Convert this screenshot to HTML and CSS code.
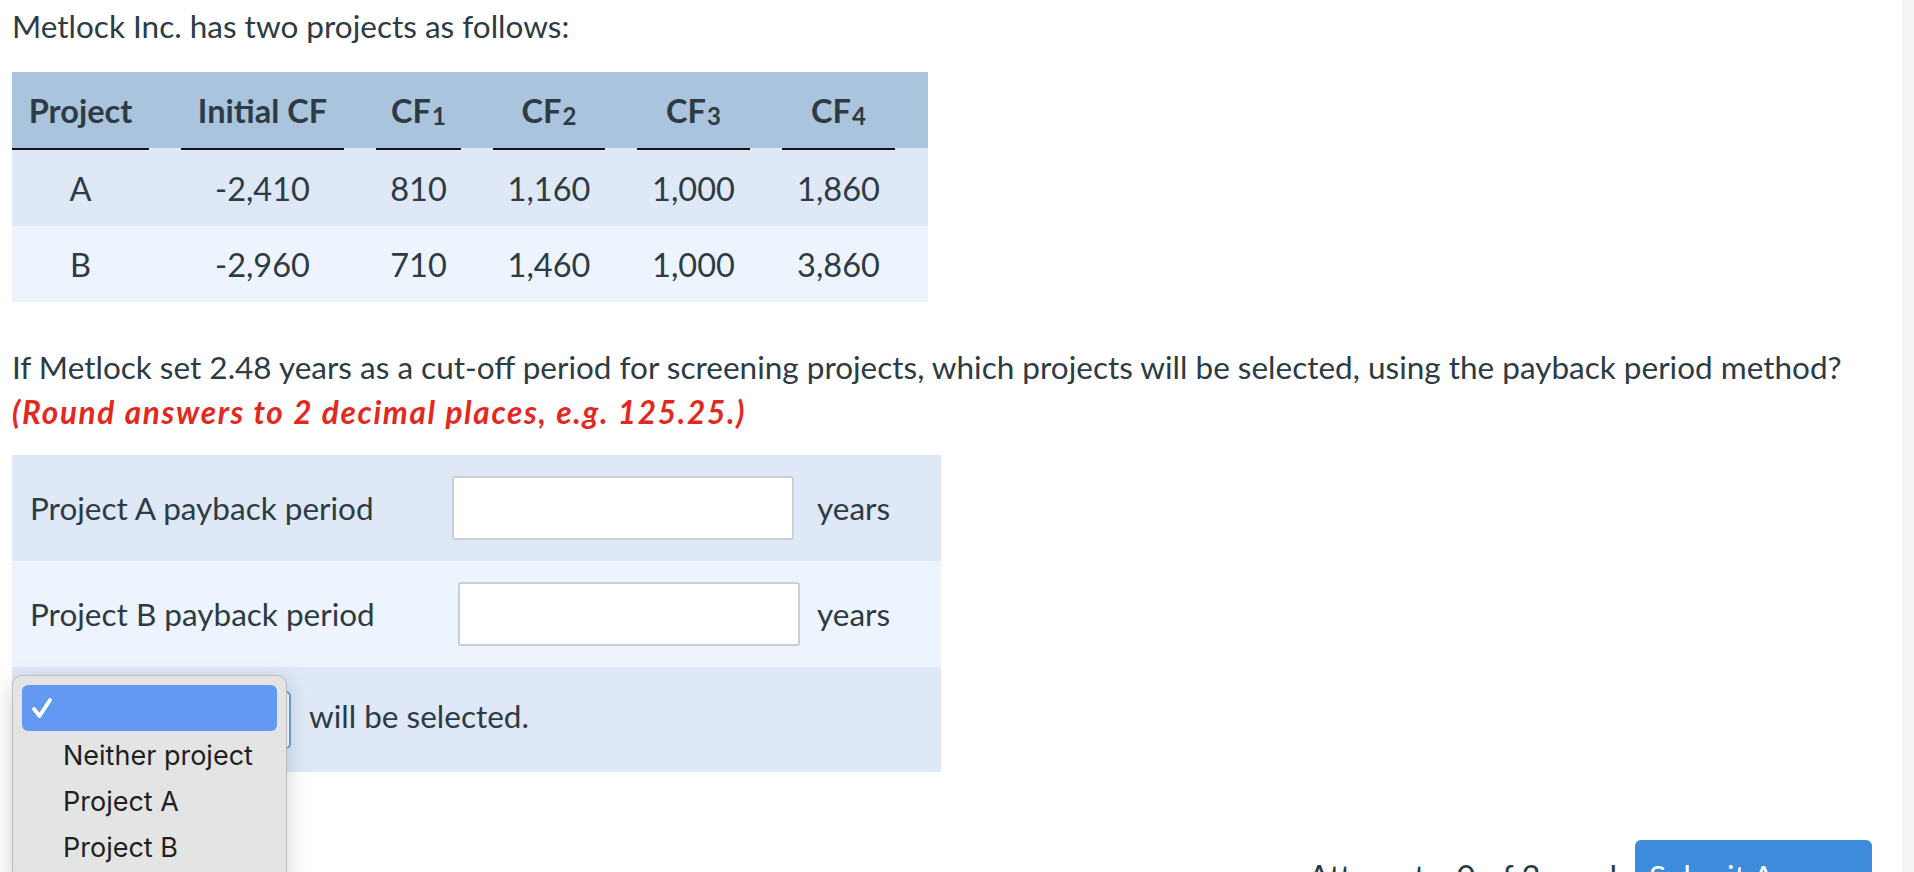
FILE: index.html
```html
<!DOCTYPE html>
<html lang="en">
<head>
  <meta charset="UTF-8">
  <meta name="viewport" content="width=device-width, initial-scale=1.0">
  <title>Payback Period Question</title>
  <link rel="stylesheet" href="styles.css">
</head>
<body>
  <div class="question-page">
    <p class="intro">Metlock Inc. has two projects as follows:</p>

    <div class="cf-table">
      <div class="cf-row cf-head">
        <div class="cf-cell">Project</div>
        <div class="cf-cell">Initial CF</div>
        <div class="cf-cell">CF<sub>1</sub></div>
        <div class="cf-cell">CF<sub>2</sub></div>
        <div class="cf-cell">CF<sub>3</sub></div>
        <div class="cf-cell">CF<sub>4</sub></div>
      </div>
      <div class="cf-row cf-odd">
        <div class="cf-cell">A</div>
        <div class="cf-cell">-2,410</div>
        <div class="cf-cell">810</div>
        <div class="cf-cell">1,160</div>
        <div class="cf-cell">1,000</div>
        <div class="cf-cell">1,860</div>
      </div>
      <div class="cf-row cf-even">
        <div class="cf-cell">B</div>
        <div class="cf-cell">-2,960</div>
        <div class="cf-cell">710</div>
        <div class="cf-cell">1,460</div>
        <div class="cf-cell">1,000</div>
        <div class="cf-cell">3,860</div>
      </div>
    </div>

    <p class="question">
      If Metlock set 2.48 years as a cut-off period for screening projects, which projects will be selected, using the payback period method?<br>
      <em class="hint">(Round answers to 2 decimal places, e.g. 125.25.)</em>
    </p>

    <div class="answers">
      <div class="answer-row row-odd">
        <label class="answer-label" for="pa">Project A payback period</label>
        <input class="answer-input" id="pa" type="text">
        <span class="unit">years</span>
      </div>
      <div class="answer-row row-even">
        <label class="answer-label label-b" for="pb">Project B payback period</label>
        <input class="answer-input" id="pb" type="text">
        <span class="unit unit-b">years</span>
      </div>
      <div class="answer-row row-odd row-select">
        <div class="fake-select"></div>
        <span class="select-text">will be selected.</span>
      </div>

      <!-- open native dropdown -->
      <div class="dropdown">
        <div class="dropdown-item is-active">
          <svg class="check" width="22" height="22" viewBox="0 0 22 22">
            <polyline points="3,12 8.5,19 19,3" fill="none" stroke="#fff" stroke-width="3.8" stroke-linecap="round" stroke-linejoin="round"/>
          </svg>
        </div>
        <div class="dropdown-item">Neither project</div>
        <div class="dropdown-item">Project A</div>
        <div class="dropdown-item">Project B</div>
      </div>
    </div>

    <div class="submit-bar">
      <span class="attempts">Attempts: 0 of 3 used</span>
      <button class="submit-btn" type="button">Submit Answer</button>
    </div>
  </div>
  <div class="scroll-track"></div>
</body>
</html>
```

FILE: styles.css
```css
body {
  margin: 0;
  font-family: Lato, "Open Sans", sans-serif;
  font-size: 31.5px;
  color: #2d3b45;
  background: #fff;
}

.question-page {
  padding: 0 12px;
  position: relative;
}

.intro {
  margin: 0;
  padding-top: 8px;
  line-height: 36px;
}

/* cash flow table */
.cf-table {
  margin-top: 28px;
  width: 916px;
  font-size: 32.5px;
}

.cf-row {
  display: grid;
  grid-template-columns: 137px 163px 85px 112px 113px 113px;
  column-gap: 32px;
  padding-right: 33px;
  height: 76px;
}

.cf-head {
  height: 78px;
  font-weight: bold;
  background: linear-gradient(to bottom, #aac4dd calc(100% - 2px), #dee8f6 calc(100% - 2px));
}

.cf-head .cf-cell {
  border-bottom: 2px solid #111;
}

.cf-odd {
  background-color: #dee8f6;
}

.cf-even {
  background-color: #eef4fd;
}

.cf-cell {
  display: flex;
  align-items: center;
  justify-content: center;
}

.cf-cell sub {
  font-size: 24px;
  position: relative;
  top: 5px;
  vertical-align: baseline;
  margin-left: 1px;
}

/* question text */
.question {
  margin: 43px 0 0;
  line-height: 45px;
}

.hint {
  color: #e3281f;
  font-weight: bold;
  font-style: italic;
  letter-spacing: 1.7px;
}

/* answer area */
.answers {
  position: relative;
  margin-top: 20px;
  width: 929px;
}

.answer-row {
  display: flex;
  align-items: center;
  height: 106px;
  padding-left: 18px;
}

.row-odd {
  background-color: #dee8f6;
}

.row-even {
  background-color: #eef4fd;
}

.row-select {
  height: 105px;
  box-sizing: border-box;
  padding-bottom: 7px;
}

.answer-label {
  width: 422px;
}

.label-b {
  width: 428px;
}

.answer-input {
  box-sizing: border-box;
  width: 342px;
  height: 64px;
  border: 2px solid #cbcfd3;
  border-radius: 3px;
  background: #fff;
  font: inherit;
  padding: 0 12px;
}

.unit {
  margin-left: 23px;
}

.unit-b {
  margin-left: 17px;
}

.fake-select {
  box-sizing: border-box;
  width: 261px;
  height: 58px;
  margin-top: 7px;
  border: 2px solid #6ba6e3;
  border-radius: 5px;
  background: #fff;
}

.select-text {
  margin-left: 18px;
}

/* open select menu */
.dropdown {
  position: absolute;
  left: 0;
  top: 220px;
  width: 275px;
  height: 210px;
  box-sizing: border-box;
  padding: 9px 9px 0 9px;
  background: #e4e4e4;
  border: 1px solid #bdbdbd;
  border-radius: 10px;
  box-shadow: 0 6px 22px rgba(0, 0, 0, 0.18);
  font-family: Inter, "Noto Sans", sans-serif;
  font-size: 27px;
  color: #1f1f1f;
}

.dropdown-item {
  height: 46px;
  line-height: 50px;
  padding-left: 41px;
  border-radius: 6px;
}

.dropdown-item.is-active {
  background: #6399f3;
  position: relative;
}

.check {
  position: absolute;
  left: 9px;
  top: 12px;
}

/* bottom bar */
.submit-bar {
  display: flex;
  justify-content: flex-end;
  align-items: center;
  gap: 18px;
  margin-top: 68px;
  padding-right: 30px;
}

.attempts {
  font-size: 32.8px;
}

.submit-btn {
  width: 237px;
  padding: 18px 0;
  border: none;
  border-radius: 6px;
  background: #3d8bdb;
  color: #fff;
  font: inherit;
  line-height: 36px;
}

.scroll-track {
  position: fixed;
  top: 0;
  right: 0;
  width: 12px;
  height: 100%;
  background: #f4f4f4;
}
```
